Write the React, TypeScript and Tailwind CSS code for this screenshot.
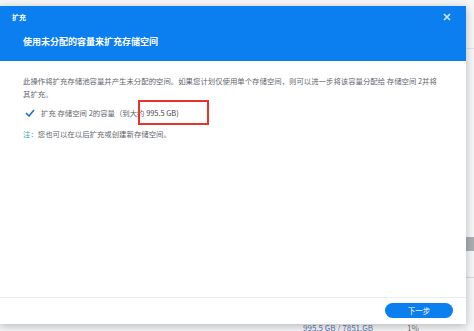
import React from 'react';

const font = { fontFamily: '"Noto Sans CJK SC", "Noto Sans", sans-serif' };

const App: React.FC = () => {
  return (
    <div className="relative w-[474px] h-[331px] overflow-hidden bg-[#f4f5f6]" style={font}>
      {/* page behind the dialog */}
      <div className="absolute right-0 top-[48px] w-[12px] h-px bg-[#dcdfe3]" />
      <div className="absolute right-0 top-[237px] w-[12px] h-[14px] bg-[#a9adb2]" />
      <div className="absolute right-0 top-[277px] w-[12px] h-px bg-[#d4d7db]" />
      <div className="absolute left-[303px] top-[324px] flex gap-[34px] text-[8px] leading-[7px] text-[#5a7bb0]">
        <span>995.5 GB / 7851.GB</span>
        <span className="text-[#777]">1%</span>
      </div>

      {/* dialog */}
      <div className="absolute left-0 top-[6px] w-[466px] h-[318px] flex flex-col bg-white shadow-[0_2px_8px_rgba(0,0,0,0.25)]">
        <div className="h-[55px] bg-[#0b7fef] px-[12px] pt-[6px] text-white">
          <div className="flex items-center justify-between">
            <span className="text-[7px] font-bold">扩充</span>
            <svg width="8" height="8" viewBox="0 0 8 8" className="mr-[3px]">
              <path d="M1 1L7 7M7 1L1 7" stroke="#d8e9ff" strokeWidth="1.6" />
            </svg>
          </div>
          <div className="mt-[12px] pl-[11px] text-[9px] font-bold">使用未分配的容量来扩充存储空间</div>
        </div>

        <div className="flex-1 px-[23px] pt-[13px] text-[7.4px] leading-[13px] text-[#62666d]">
          <p>
            此操作将扩充存储池容量并产生未分配的空间。如果您计划仅使用单个存储空间，则可以进一步将该容量分配给 存储空间 2并将其扩充。
          </p>
          <div className="mt-[6px] flex items-center gap-[6px]">
            <svg width="10" height="8" viewBox="0 0 10 8" className="ml-[2px]">
              <path d="M1 4L4 7L9 1" fill="none" stroke="#1d6fd0" strokeWidth="1.6" />
            </svg>
            <span className="relative">
              扩充 存储空间 2的容量（到大约 <span className="text-[#444]">995.5 GB)</span>
              <span className="absolute left-[97px] top-[-6px] w-[71px] h-[25px] border-2 border-[#e8322c]" />
            </span>
          </div>
          <div className="mt-[8px]">
            <span className="text-[#2aa8a0]">注：</span>
            <span>您也可以在以后扩充或创建新存储空间。</span>
          </div>
        </div>

        <div className="h-[27px] border-t border-[#ececec] flex items-start justify-end pr-[13px] pt-[5px]">
          <button className="w-[68px] h-[15px] rounded-full bg-[#0b7fef] text-white text-[7.5px] leading-[15px]">
            下一步
          </button>
        </div>
      </div>
    </div>
  );
};

export default App;
